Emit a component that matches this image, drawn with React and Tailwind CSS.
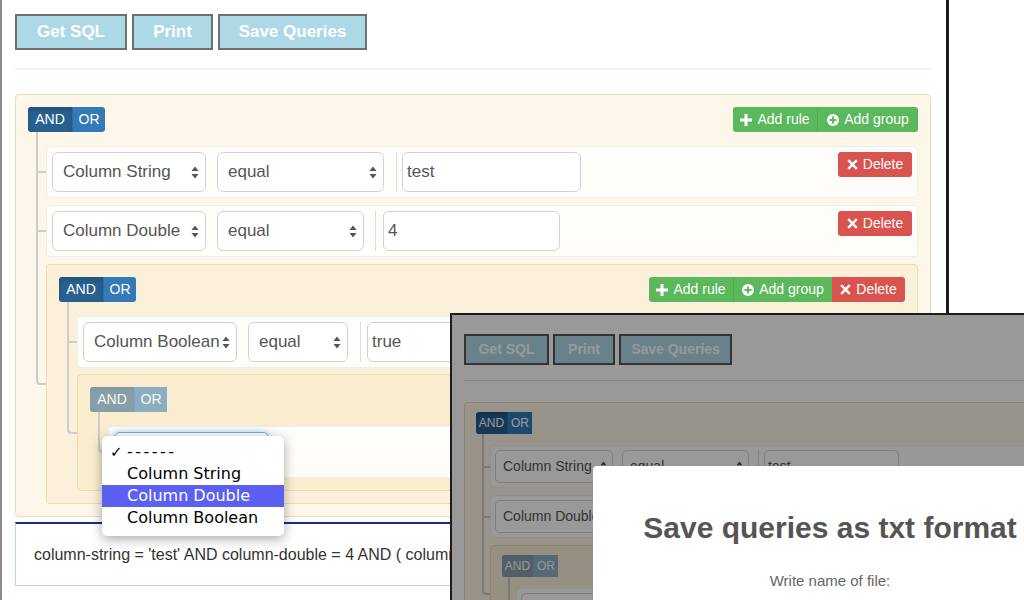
import clsx from "clsx";

function Arrows({ sm }) {
  return (
    <svg viewBox="0 0 8 13" className={sm ? "h-[11px] w-[7px] shrink-0" : "h-[13px] w-[8px] shrink-0"}>
      <path d="M4 0.5 7.5 5H0.5Z" fill="#555" />
      <path d="M4 12.5 7.5 8H0.5Z" fill="#555" />
    </svg>
  );
}

function PlusIcon() {
  return (
    <svg viewBox="0 0 12 12" className="h-[12px] w-[12px] shrink-0">
      <path d="M4.5 0h3v4.5H12v3H7.5V12h-3V7.5H0v-3h4.5z" fill="currentColor" />
    </svg>
  );
}

function PlusSignIcon() {
  return (
    <svg viewBox="0 0 12 12" className="h-[12px] w-[12px] shrink-0">
      <circle cx="6" cy="6" r="6" fill="currentColor" />
      <path d="M5 2.5h2V5h2.5v2H7v2.5H5V7H2.5V5H5z" fill="#5cb85c" />
    </svg>
  );
}

function RemoveIcon() {
  return (
    <svg viewBox="0 0 12 12" className="h-[11px] w-[11px] shrink-0">
      <path
        d="M2.2 0.4 6 4.2 9.8 0.4 11.6 2.2 7.8 6 11.6 9.8 9.8 11.6 6 7.8 2.2 11.6 0.4 9.8 4.2 6 0.4 2.2Z"
        fill="currentColor"
      />
    </svg>
  );
}

function TopButtons({ sm }) {
  const base = sm
    ? "h-[31px] border-2 border-[#555] bg-[#add8e6] text-[14px] font-bold text-white"
    : "h-9 border-2 border-[#707070] bg-[#add8e6] text-[17px] font-bold text-white";
  return (
    <div className={clsx("flex", sm ? "gap-[4px]" : "gap-[5px]")}>
      <button className={clsx(base, sm ? "w-[85px]" : "w-[112px]")}>Get SQL</button>
      <button className={clsx(base, sm ? "w-[62px]" : "w-[81px]")}>Print</button>
      <button className={clsx(base, sm ? "w-[113px]" : "w-[149px]")}>Save Queries</button>
    </div>
  );
}

function Conj({ sm, faded }) {
  return (
    <div
      className={clsx(
        "flex overflow-hidden rounded-[3px] text-white",
        sm ? "h-[22px] text-[12px]" : "h-[25px] text-[14px]",
        faded && "opacity-55"
      )}
    >
      <span
        className={clsx(
          "flex items-center justify-center bg-[#286090] shadow-[inset_0_3px_5px_rgba(0,0,0,0.15)]",
          sm ? "w-[31px]" : "w-[44px]"
        )}
      >
        AND
      </span>
      <span
        className={clsx(
          "flex items-center justify-center border-l border-[#2e6da4] bg-[#337ab7]",
          sm ? "w-[25px]" : "w-[33px]"
        )}
      >
        OR
      </span>
    </div>
  );
}

function Actions({ del }) {
  return (
    <div className="flex h-[25px] overflow-hidden rounded-[3px] text-[14px] text-white">
      <span className="flex w-[85px] items-center justify-center gap-[5px] border-r border-[#4cae4c] bg-[#5cb85c]">
        <PlusIcon />
        Add rule
      </span>
      <span className={clsx("flex items-center justify-center gap-[5px] bg-[#5cb85c]", del ? "w-[98px]" : "w-[100px]")}>
        <PlusSignIcon />
        Add group
      </span>
      {del && (
        <span className="flex w-[73px] items-center justify-center gap-[5px] bg-[#d9534f]">
          <RemoveIcon />
          Delete
        </span>
      )}
    </div>
  );
}

function DeleteBtn() {
  return (
    <span className="flex h-[25px] w-[74px] shrink-0 items-center justify-center gap-[5px] rounded-[3px] bg-[#d9534f] text-[14px] text-white">
      <RemoveIcon />
      Delete
    </span>
  );
}

function Select({ label, w, sm, focus }) {
  return (
    <div
      className={clsx(
        "flex shrink-0 items-center justify-between border bg-white text-[#555]",
        sm
          ? "h-[33px] rounded-[5px] pl-[7px] pr-[5px] text-[14px]"
          : "h-10 rounded-[6px] pl-[10px] pr-[6px] text-[17px]",
        focus ? "border-[#66afe9] shadow-[0_0_6px_rgba(102,175,233,0.6)]" : "border-[#d2d2d2]",
        w
      )}
    >
      <span className="whitespace-nowrap">{label}</span>
      <Arrows sm={sm} />
    </div>
  );
}

function Value({ text, w, sm, box }) {
  return (
    <div className={clsx("flex items-center border-l border-[#ddd]", box)}>
      <div
        className={clsx(
          "flex shrink-0 items-center border border-[#d2d2d2] bg-white text-[#555]",
          sm ? "h-[33px] rounded-[5px] pl-[3px] text-[14px]" : "h-10 rounded-[6px] pl-[4px] text-[17px]",
          w
        )}
      >
        {text}
      </div>
    </div>
  );
}

function Rule({ children, del, sm }) {
  return (
    <div
      className={clsx(
        "flex items-start justify-between rounded-[4px] border border-[#eee] bg-[#fefdfa]",
        sm ? "p-[4px]" : "p-[5px]"
      )}
    >
      <div className={clsx("flex items-center", sm ? "gap-[9px]" : "gap-[11px]")}>{children}</div>
      {del && <DeleteBtn />}
    </div>
  );
}

function Branch({ first, last, sm, children }) {
  return (
    <div className="relative">
      <span
        className={clsx(
          "absolute border-b-2 border-l-2 border-[#ccc]",
          sm ? "-left-[8px] w-[8px]" : "-left-[10px] w-[10px]",
          first
            ? sm
              ? "-top-[11px] h-[calc(50%+12px)]"
              : "-top-[14px] h-[calc(50%+15px)]"
            : "-top-[7px] h-[calc(50%+8px)]",
          last && "rounded-bl-[4px]"
        )}
      />
      {!last && (
        <span
          className={clsx(
            "absolute top-1/2 h-[calc(50%+1px)] border-l-2 border-[#ccc]",
            sm ? "-left-[8px]" : "-left-[10px]"
          )}
        />
      )}
      {children}
    </div>
  );
}

function Dropdown() {
  const items = ["------", "Column String", "Column Double", "Column Boolean"];
  return (
    <div className="absolute -left-[12px] top-[4px] z-10 w-[182px] rounded-[5px] bg-white pb-[7px] pt-[5px] font-['DejaVu_Sans',sans-serif] text-[16px] text-black shadow-[0_3px_12px_rgba(0,0,0,0.35)]">
      {items.map((item, i) => (
        <div
          key={item}
          className={clsx(
            "relative flex h-[22px] items-center pl-[25px]",
            i === 2 && "bg-[#5b60f2] text-white"
          )}
        >
          {i === 0 && <span className="absolute left-[8px] text-[15px]">✓</span>}
          <span className={i === 0 ? "tracking-[2.5px]" : ""}>{item}</span>
        </div>
      ))}
    </div>
  );
}

function MainWindow() {
  return (
    <div className="h-[600px] w-[949px] border-l-2 border-r-[3px] border-l-[#8c8c8c] border-r-[#1a1a1a] pl-[13px] pr-[15px] pt-[14px]">
      <TopButtons />
      <div className="mt-[18px] border-t-2 border-[#f0f0f0]" />

      {/* Query group */}
      <div className="mt-[24px] rounded-[4px] border border-[#eedcae] bg-[#fdf7ea] p-[12px]">
        <div className="flex items-start justify-between">
          <Conj />
          <Actions />
        </div>
        <div className="ml-[18px] mt-[14px] flex flex-col gap-[7px]">
          <Branch first>
            <Rule del>
              <Select label="Column String" w="w-[154px]" />
              <Select label="equal" w="w-[167px]" />
              <Value text="test" w="w-[179px]" box="ml-[1px] pl-[5px]" />
            </Rule>
          </Branch>
          <Branch>
            <Rule del>
              <Select label="Column Double" w="w-[154px]" />
              <Select label="equal" w="w-[147px]" />
              <Value text="4" w="w-[177px]" box="ml-0 pl-[7px]" />
            </Rule>
          </Branch>
          <Branch last>
            <div className="rounded-[4px] border border-[#eedcae] bg-[#fbf1da] p-[12px]">
              <div className="flex items-start justify-between">
                <Conj />
                <Actions del />
              </div>
              <div className="ml-[18px] mt-[14px] flex flex-col gap-[6px]">
                <Branch first>
                  <Rule>
                    <Select label="Column Boolean" w="w-[154px]" />
                    <Select label="equal" w="w-[100px]" />
                    <Value text="true" w="w-[220px]" box="ml-[1px] pl-[6px]" />
                  </Rule>
                </Branch>
                <Branch last>
                  <div className="rounded-[4px] border border-[#eedcae] bg-[#faedcf] p-[12px]">
                    <Conj faded />
                    <div className="ml-[18px] mt-[14px] flex flex-col">
                      <Branch first last>
                        <Rule>
                          <div className="relative">
                            <Select label="" w="w-[155px]" focus />
                            <Dropdown />
                          </div>
                        </Rule>
                      </Branch>
                    </div>
                  </div>
                </Branch>
              </div>
            </div>
          </Branch>
        </div>
      </div>

      {/* SQL output */}
      <div className="mt-[5px] flex h-[64px] items-center border border-t-2 border-[#a9dbee] border-t-[#1b2a8e] pl-[18px] text-[16px] text-[#333]">
        column-string = 'test' AND column-double = 4 AND ( column-boolean = true )
      </div>
    </div>
  );
}

function BackWindow() {
  return (
    <div className="absolute bottom-0 left-[450px] right-0 top-[313px] overflow-hidden border-l-2 border-t-2 border-[#1c1c1c] bg-white">
      <div className="w-[760px] pl-[12px] pt-[19px]">
        <TopButtons sm />
        <div className="mt-[15px] border-t border-[#ddd]" />
        <div className="mt-[21px] rounded-[4px] border border-[#eedcae] bg-[#fdf7ea] pb-[10px] pl-[11px] pr-[10px] pt-[9px]">
          <Conj sm />
          <div className="ml-[14px] mt-[11px] flex flex-col gap-[7px]">
            <Branch first sm>
              <Rule sm>
                <Select sm label="Column String" w="w-[118px]" />
                <Select sm label="equal" w="w-[127px]" />
                <Value sm text="test" w="w-[135px]" box="ml-0 pl-[5px]" />
              </Rule>
            </Branch>
            <Branch sm>
              <Rule sm>
                <Select sm label="Column Double" w="w-[118px]" />
                <Select sm label="equal" w="w-[127px]" />
                <Value sm text="4" w="w-[135px]" box="ml-0 pl-[5px]" />
              </Rule>
            </Branch>
            <Branch last sm>
              <div className="rounded-[4px] border border-[#eedcae] bg-[#fbf1da] pb-[10px] pl-[11px] pr-[10px] pt-[9px]">
                <Conj sm faded />
                <div className="ml-[14px] mt-[11px] flex flex-col">
                  <Branch first last sm>
                    <Rule sm>
                      <Select sm label="Column Boolean" w="w-[118px]" />
                      <Select sm label="equal" w="w-[80px]" />
                    </Rule>
                  </Branch>
                </div>
              </div>
            </Branch>
          </div>
        </div>
      </div>

      {/* dim backdrop */}
      <div className="absolute inset-0 bg-black/40" />

      {/* Save modal */}
      <div className="absolute left-[141px] top-[151px] h-[220px] w-[474px] rounded-[4px] bg-white pt-[44px] text-center">
        <h2 className="text-[30px] font-bold leading-[36px] text-[#555]">Save queries as txt format</h2>
        <p className="mt-[26px] text-[15px] leading-[18px] text-[#666]">Write name of file:</p>
      </div>
    </div>
  );
}

export default function App() {
  return (
    <div className="relative h-[600px] w-[1024px] overflow-hidden bg-white font-['Liberation_Sans',Arial,sans-serif]">
      <MainWindow />
      <BackWindow />
    </div>
  );
}
